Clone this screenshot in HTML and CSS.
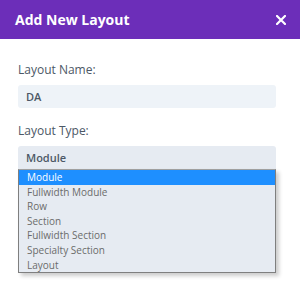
FILE: index.html
```html
<!DOCTYPE html>
<html>
<head>
    <title>Add New Layout</title>
    <link rel="stylesheet" href="styles.css">
</head>
<body>
    <div class="modal">
        <div class="modal-header">
            <h1>Add New Layout</h1>
            <span class="close">
                <svg width="10" height="10" viewBox="0 0 10 10">
                    <path d="M1 1 L9 9 M9 1 L1 9" stroke="#fff" stroke-width="2.2" stroke-linecap="square"/>
                </svg>
            </span>
        </div>

        <div class="modal-body">
            <label class="field-label">Layout Name:</label>
            <div class="text-input">DA</div>

            <label class="field-label">Layout Type:</label>
            <div class="select-wrap">
                <div class="select-box">Module</div>
                <ul class="select-options">
                    <li class="selected">Module</li>
                    <li>Fullwidth Module</li>
                    <li>Row</li>
                    <li>Section</li>
                    <li>Fullwidth Section</li>
                    <li>Specialty Section</li>
                    <li>Layout</li>
                </ul>
            </div>
        </div>
    </div>
</body>
</html>
```

FILE: styles.css
```css
body {
    margin: 0;
    font-family: "Open Sans", Arial, sans-serif;
    background-color: #fff;
}

.modal {
    width: 300px;
    height: 298px;
    background: #fff;
}

.modal-header {
    height: 39px;
    padding: 0 14px 0 15px;
    background-color: #6c2eb9;
    display: flex;
    align-items: center;
    justify-content: space-between;
}

.modal-header h1 {
    margin: 0;
    font-size: 14px;
    font-weight: 700;
    color: #fff;
}

.close {
    display: flex;
    margin-top: 1px;
}

.modal-body {
    padding: 22px 24px 0 18px;
}

.field-label {
    display: block;
    font-size: 12px;
    font-weight: 500;
    color: #4c5866;
    margin-bottom: 7px;
}

.text-input,
.select-box {
    height: 23px;
    line-height: 23px;
    padding: 0 8px;
    border-radius: 3px;
    background-color: #eef3f8;
    font-size: 11px;
    font-weight: 600;
    color: #4c5866;
}

.text-input {
    margin-bottom: 14px;
}

.select-box {
    background-color: #e6ebf2;
    border-radius: 3px 3px 0 0;
}

.select-wrap {
    position: relative;
}

.select-options {
    position: absolute;
    top: 23px;
    left: 0;
    right: 0;
    margin: 0;
    padding: 0;
    list-style: none;
    background-color: #e6ebf2;
    border: 1px solid #7f7f7f;
    border-top-color: #a0a0a0;
    box-shadow: 3px 3px 4px rgba(0,0,0,0.2);
}

.select-options li {
    height: 14.6px;
    line-height: 14.6px;
    padding: 0 8px;
    font-size: 10px;
    color: #6b6b6b;
}

.select-options li.selected {
    background-color: #1e8fff;
    color: #fff;
}
```
